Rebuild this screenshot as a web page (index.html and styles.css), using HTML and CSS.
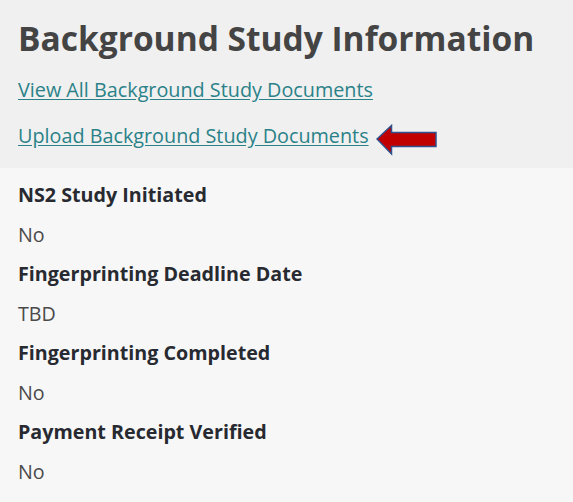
FILE: index.html
```html
<!DOCTYPE html>
<html>
<head>
<meta charset="utf-8">
<link rel="stylesheet" href="styles.css">
</head>
<body>
<div class="page">
  <header class="head">
    <h1 class="title">Background Study Information</h1>
    <a class="link" href="#">View All Background Study Documents</a>
    <div class="upload-row">
      <a class="link" href="#">Upload Background Study Documents</a>
      <svg class="arrow" width="62" height="36" viewBox="0 0 62 36">
        <path d="M1 15 L15.5 1.5 L15.5 8.5 L60 8.5 L60 22.5 L15.5 22.5 L15.5 30 Z" fill="#c00000" stroke="#2f528f" stroke-width="1.5" stroke-linejoin="miter"/>
      </svg>
    </div>
  </header>
  <section class="details">
    <div class="label">NS2 Study Initiated</div>
    <div class="value">No</div>
    <div class="label">Fingerprinting Deadline Date</div>
    <div class="value">TBD</div>
    <div class="label">Fingerprinting Completed</div>
    <div class="value">No</div>
    <div class="label">Payment Receipt Verified</div>
    <div class="value">No</div>
  </section>
</div>
</body>
</html>
```
FILE: styles.css
```css
html, body {
  margin: 0;
  padding: 0;
}
body {
  background: #f7f7f7;
  font-family: "Open Sans", "Noto Sans", sans-serif;
  width: 573px;
  height: 502px;
  overflow: hidden;
}
.page {
  display: flex;
  flex-direction: column;
}
.head {
  background: #f0f0f0;
  height: 168px;
  padding: 0 18px;
  box-sizing: border-box;
  display: flex;
  flex-direction: column;
  align-items: flex-start;
}
.title {
  margin: 0;
  margin-top: 16px;
  font-size: 33.5px;
  font-weight: 700;
  line-height: 44px;
  color: #444444;
}
.link {
  color: #2a8288;
  font-size: 19.8px;
  line-height: 26px;
  text-decoration: underline;
  text-underline-offset: 2px;
}
.head > .link {
  margin-top: 17px;
}
.upload-row {
  margin-top: 20px;
  display: flex;
  align-items: flex-start;
}
.arrow {
  margin-left: 7px;
  margin-top: 1px;
}
.details {
  padding: 7px 18px 0;
  display: flex;
  flex-direction: column;
}
.label {
  font-size: 19.7px;
  font-weight: 700;
  color: #272a30;
  line-height: 39.5px;
}
.value {
  font-size: 19.7px;
  color: #4a4a4a;
  line-height: 39.5px;
}
```
